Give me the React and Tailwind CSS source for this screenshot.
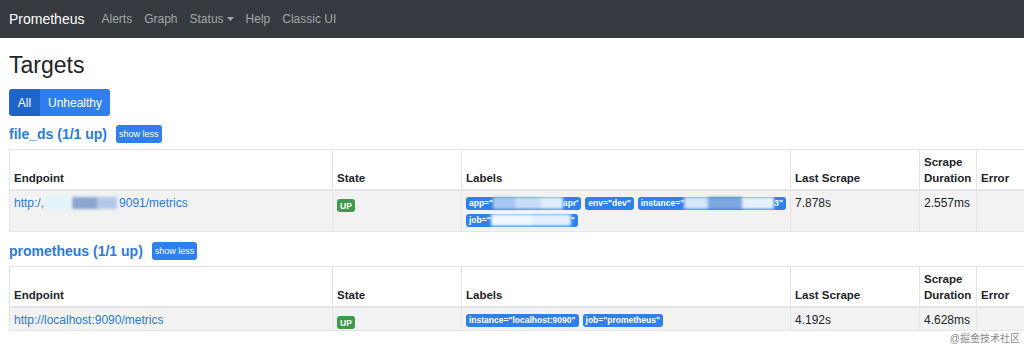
const FONT = { fontFamily: '"Liberation Sans", Arial, sans-serif' };

const NAV_LINKS = ['Alerts', 'Graph', 'Status', 'Help', 'Classic UI'];

// smudged blocks standing in for the redacted parts of the original screenshot
function Smudge({ parts, className = '' }) {
  return (
    <span className={`inline-flex h-[12px] items-center blur-[1.5px] ${className}`}>
      {parts.map(([w, bg], i) => (
        <span key={i} className={`inline-block h-full ${w} ${bg}`} />
      ))}
    </span>
  );
}

function Badge({ children, green }) {
  return (
    <span
      className={`inline-flex h-[13px] items-center rounded-[3px] px-[3px] text-[8.5px] font-bold leading-none text-white ${
        green ? 'bg-[#3d9b4a]' : 'bg-[#2f7fee]'
      }`}
    >
      {children}
    </span>
  );
}

function Th({ children, className = '' }) {
  return (
    <th
      className={`border border-b-2 border-[#e3e5e8] px-[4px] pb-[3px] text-left align-bottom text-[11.5px] font-bold leading-[16px] text-[#212529] ${className}`}
    >
      {children}
    </th>
  );
}

function Td({ children }) {
  return (
    <td className="border border-[#e3e5e8] bg-[#f2f2f2] px-[4px] pt-[4px] align-top text-[12px] leading-[16px] text-[#212529]">
      {children}
    </td>
  );
}

function PoolHeader({ name, className = '' }) {
  return (
    <div className={`flex items-center gap-[9px] ${className}`}>
      <h2 className="text-[14px] font-bold leading-none text-[#2a7ae2]">{name} (1/1 up)</h2>
      <button className="h-[18px] rounded-[3px] bg-[#2f7fee] px-[3px] text-[9px] leading-none text-white">
        show less
      </button>
    </div>
  );
}

function TargetTable({ rowHeight, endpoint, labels, lastScrape, duration }) {
  return (
    <table className="w-[1047px] table-fixed border-collapse">
      <colgroup>
        <col className="w-[323px]" />
        <col className="w-[129px]" />
        <col className="w-[329px]" />
        <col className="w-[129px]" />
        <col className="w-[57px]" />
        <col className="w-[80px]" />
      </colgroup>
      <thead>
        <tr className="h-[40px]">
          <Th>Endpoint</Th>
          <Th>State</Th>
          <Th>Labels</Th>
          <Th>Last Scrape</Th>
          <Th>Scrape Duration</Th>
          <Th>Error</Th>
        </tr>
      </thead>
      <tbody>
        <tr className={rowHeight}>
          <Td>
            <span className="text-[#2a7ae2]">{endpoint}</span>
          </Td>
          <Td>
            <div className="pt-[2px]">
              <Badge green>UP</Badge>
            </div>
          </Td>
          <Td>
            <div className="flex flex-wrap gap-x-[4px] gap-y-[4px] pt-[2px]">{labels}</div>
          </Td>
          <Td>{lastScrape}</Td>
          <Td>{duration}</Td>
          <Td />
        </tr>
      </tbody>
    </table>
  );
}

export default function App() {
  return (
    <div className="h-[348px] w-[1024px] overflow-hidden bg-white" style={FONT}>
      <nav className="flex h-[38px] items-center bg-[#343a40] px-[9px]">
        <span className="mr-[17px] text-[14px] leading-none text-white">Prometheus</span>
        <div className="flex items-center gap-[12px] text-[12px] text-[#a3a6a9]">
          {NAV_LINKS.map((l) => (
            <span key={l} className="flex items-center">
              {l}
              {l === 'Status' && (
                <svg className="ml-[3px] h-[4px] w-[7px]" viewBox="0 0 7 4">
                  <path d="M0 0h7L3.5 4z" fill="currentColor" />
                </svg>
              )}
            </span>
          ))}
        </div>
      </nav>

      <div className="px-[9px]">
        <h1 className="mt-[13px] text-[23px] leading-[28px] text-[#212529]">Targets</h1>

        <div className="mt-[10px] flex h-[27px] w-fit overflow-hidden rounded-[3px] text-[12px] text-white">
          <span className="flex w-[31px] items-center justify-center bg-[#1f64c7]">All</span>
          <span className="flex w-[70px] items-center justify-center bg-[#2f7fee]">Unhealthy</span>
        </div>

        <PoolHeader name="file_ds" className="mt-[9px]" />

        <div className="mt-[6px]">
          <TargetTable
            rowHeight="h-[42px]"
            endpoint={
              <span className="inline-flex items-center">
                http:/,
                <Smudge
                  className="ml-[2px] mr-[2px]"
                  parts={[
                    ['w-[24px]', 'bg-[#dff3fa]'],
                    ['w-[2px]', 'bg-white'],
                    ['w-[25px]', 'bg-[#8aa5cf]'],
                    ['w-[20px]', 'bg-[#b2c8e8]'],
                  ]}
                />
                9091/metrics
              </span>
            }
            labels={
              <>
                <Badge>
                  app=&quot;
                  <Smudge
                    parts={[
                      ['w-[22px]', 'bg-[#a9c7f3]'],
                      ['w-[26px]', 'bg-[#c9dcf8]'],
                      ['w-[22px]', 'bg-[#e2edfc]'],
                    ]}
                  />
                  apr&apos;
                </Badge>
                <Badge>env=&quot;dev&quot;</Badge>
                <Badge>
                  instance=&quot;
                  <Smudge
                    parts={[
                      ['w-[24px]', 'bg-[#d4e6f8]'],
                      ['w-[34px]', 'bg-[#7ea6df]'],
                      ['w-[32px]', 'bg-[#e9f1fd]'],
                    ]}
                  />
                  3&quot;
                </Badge>
                <Badge>
                  job=&quot;
                  <Smudge
                    parts={[
                      ['w-[40px]', 'bg-[#f3f8fe]'],
                      ['w-[40px]', 'bg-[#e4eefc]'],
                    ]}
                  />
                  &quot;
                </Badge>
              </>
            }
            lastScrape="7.878s"
            duration="2.557ms"
          />
        </div>

        <PoolHeader name="prometheus" className="mt-[10px]" />

        <div className="mt-[6px]">
          <TargetTable
            rowHeight="h-[24px]"
            endpoint="http://localhost:9090/metrics"
            labels={
              <>
                <Badge>instance=&quot;localhost:9090&quot;</Badge>
                <Badge>job=&quot;prometheus&quot;</Badge>
              </>
            }
            lastScrape="4.192s"
            duration="4.628ms"
          />
        </div>

        <div
          className="mr-[-5px] mt-[2px] text-right text-[10px] leading-[12px] text-[#8a8a8a]"
          style={{ fontFamily: '"Liberation Sans", "Noto Sans CJK SC", sans-serif' }}
        >
          @掘金技术社区
        </div>
      </div>
    </div>
  );
}
